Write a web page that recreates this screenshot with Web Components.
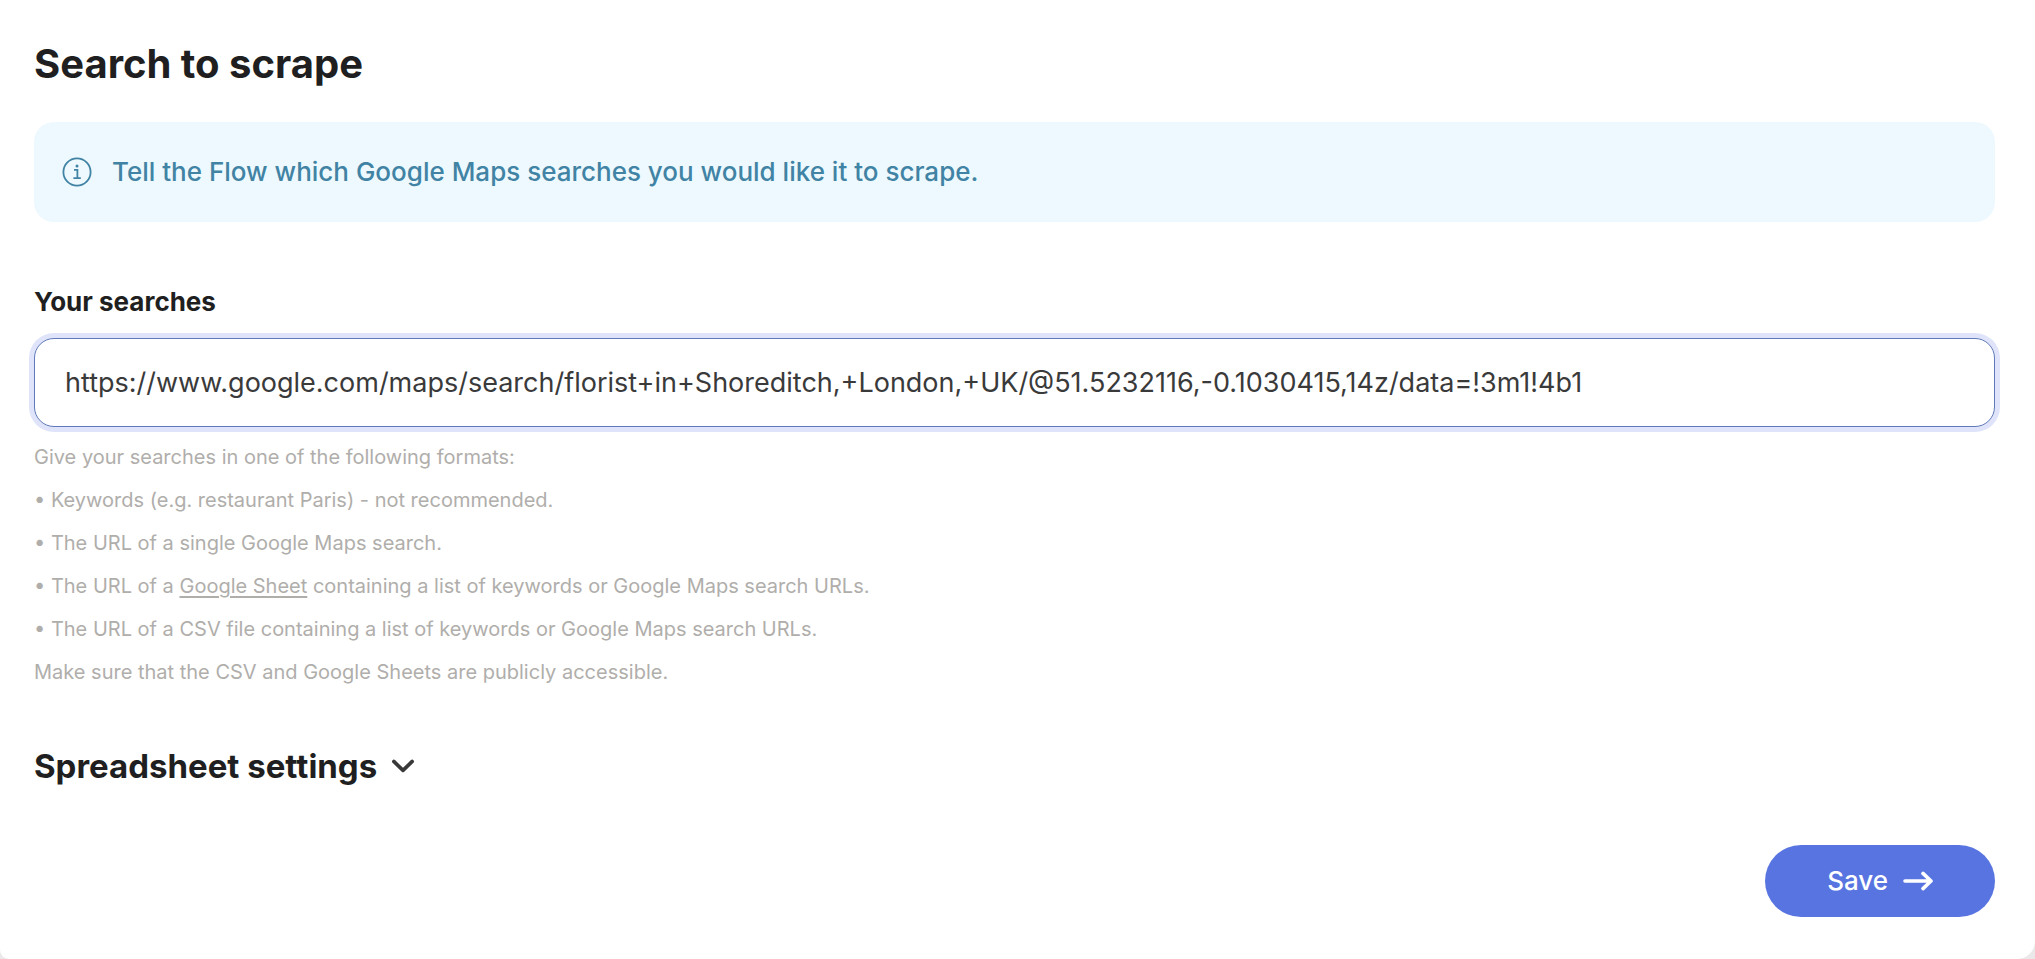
<!DOCTYPE html>
<html lang="en">
<head>
<meta charset="utf-8">
<title>Search to scrape</title>
<style>
  body { margin: 0; background: #ebe8ea; font-family: Inter, "Open Sans", sans-serif; color: #1f1f21; }
</style>
</head>
<body>
<step-card>
  <span slot="title">Search to scrape</span>
  <info-note>Tell the Flow which Google Maps searches you would like it to scrape.</info-note>
  <search-field label="Your searches" value="https://www.google.com/maps/search/florist+in+Shoreditch,+London,+UK/@51.5232116,-0.1030415,14z/data=!3m1!4b1">
    <help-line>Give your searches in one of the following formats:</help-line>
    <help-line>• Keywords (e.g. restaurant Paris) - not recommended.</help-line>
    <help-line>• The URL of a single Google Maps search.</help-line>
    <help-line>• The URL of a <a href="#sheet" style="color: inherit; text-underline-offset: 3px">Google Sheet</a> containing a list of keywords or Google Maps search URLs.</help-line>
    <help-line>• The URL of a CSV file containing a list of keywords or Google Maps search URLs.</help-line>
    <help-line>Make sure that the CSV and Google Sheets are publicly accessible.</help-line>
  </search-field>
  <settings-toggle>Spreadsheet settings</settings-toggle>
  <save-button slot="actions">Save</save-button>
</step-card>

<script>
  const component = (name, markup, ready) => {
    const template = document.createElement('template');
    template.innerHTML = markup;
    customElements.define(name, class extends HTMLElement {
      constructor() {
        super();
        this.attachShadow({ mode: 'open' }).append(template.content.cloneNode(true));
      }
      connectedCallback() { if (ready) ready(this, this.shadowRoot); }
    });
  };

  component('step-card', `
    <style>
      :host { display: flex; flex-direction: column; box-sizing: border-box; min-height: 100vh;
        padding: 40px 40px 42px 34px; background: #fff; border-radius: 0 0 18px 9px; }
      h1 { margin: 0 0 34px; font-size: 40px; line-height: 48px; font-weight: 700; }
      footer { display: flex; justify-content: flex-end; margin-top: 59px; }
    </style>
    <h1><slot name="title"></slot></h1>
    <slot></slot>
    <footer><slot name="actions"></slot></footer>`);

  component('info-note', `
    <style>
      :host { display: flex; align-items: center; gap: 20px; padding: 34px 28px; border-radius: 20px;
        background: #edf9fe; color: #4183a4; font-size: 26px; line-height: 32px; font-weight: 500; }
      svg { flex: none; }
    </style>
    <svg width="30" height="30" viewBox="0 0 30 30" fill="none" stroke="currentColor" stroke-width="1.8" aria-hidden="true">
      <circle cx="15" cy="15" r="13.6"/>
      <path d="M12 12.8h3.4v8.4M11.4 21.2h7.4"/>
      <circle cx="15" cy="9" r="1.5" fill="currentColor" stroke="none"/>
    </svg>
    <span><slot></slot></span>`);

  component('search-field', `
    <style>
      :host { display: flex; flex-direction: column; margin-top: 64px; }
      label { margin-bottom: 20px; font-size: 26px; line-height: 32px; font-weight: 700; }
      input { box-sizing: border-box; width: 100%; height: 89px; margin: 0 0 9px; padding: 0 30px;
        border: 1px solid #6079b8; border-radius: 20px; outline: 0; box-shadow: 0 0 0 5px #dfe4fa;
        background: #fff; color: #3a3a3b; font: 400 27px Inter, "Open Sans", sans-serif; }
    </style>
    <label for="searches"></label>
    <input id="searches" type="text" aria-describedby="help" spellcheck="false">
    <div id="help"><slot></slot></div>`,
    (host, root) => {
      root.querySelector('label').textContent = host.getAttribute('label');
      root.querySelector('input').value = host.getAttribute('value');
    });

  component('help-line', `
    <style>
      :host { display: block; color: #b0aeab; font-size: 20px; line-height: 43px; }
    </style>
    <slot></slot>`);

  component('settings-toggle', `
    <style>
      :host { display: flex; margin-top: 52px; }
      button { display: flex; align-items: center; gap: 14px; padding: 0; border: 0; background: none;
        color: inherit; font: 700 33px/40px Inter, "Open Sans", sans-serif; cursor: pointer; }
    </style>
    <button type="button" aria-expanded="false">
      <span><slot></slot></span>
      <svg width="24" height="16" viewBox="0 0 24 16" fill="none" stroke="#39393a" stroke-width="3.6" stroke-linecap="round" stroke-linejoin="round" aria-hidden="true"><path d="M2.8 3.4 12 12.4 21.2 3.4"/></svg>
    </button>`);

  component('save-button', `
    <style>
      :host { display: block; }
      button { display: flex; align-items: center; gap: 15px; height: 72px; padding: 0 62px; border: 0;
        border-radius: 36px; background: #5874e0; color: #fff; font: 500 26px/32px Inter, "Open Sans", sans-serif; cursor: pointer; }
    </style>
    <button type="button">
      <span><slot></slot></span>
      <svg width="30" height="20" viewBox="0 0 30 20" fill="none" stroke="currentColor" stroke-width="3.6" stroke-linecap="round" stroke-linejoin="round" aria-hidden="true"><path d="M2 10h26M20 2.4 28 10l-8 7.6"/></svg>
    </button>`);
</script>
</body>
</html>
